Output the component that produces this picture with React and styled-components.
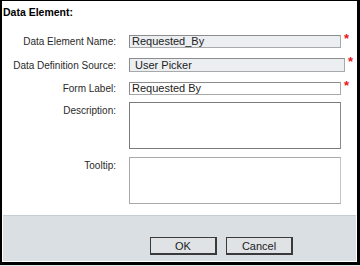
import React from 'react'
import styled, { createGlobalStyle } from 'styled-components'

const GlobalStyle = createGlobalStyle`
  html, body {
    margin: 0;
    padding: 0;
    background: #e6e9eb;
  }
  * {
    box-sizing: border-box;
  }
`

const Frame = styled.div`
  width: 360px;
  height: 265px;
  border-style: solid;
  border-color: #000;
  border-width: 1px 3px 3px 2px;
  background: #fff;
  display: flex;
  flex-direction: column;
  font-family: Arial, 'Liberation Sans', sans-serif;
  font-size: 10px;
  color: #2a2a2a;
`

const Body = styled.div`
  flex: 1;
  padding: 5px 0 0 3px;
`

const Title = styled.div`
  font-weight: bold;
  font-size: 10.5px;
  color: #000;
  height: 12px;
  line-height: 12px;
  margin: 0 0 17px -2px;
`

const Row = styled.div`
  display: flex;
  align-items: ${props => (props.top ? 'flex-start' : 'center')};
  margin-top: ${props => props.gap}px;
`

const Label = styled.div`
  width: 111px;
  text-align: right;
  white-space: nowrap;
  padding-top: ${props => (props.top ? '3px' : '0')};
  flex-shrink: 0;
`

const Field = styled.div`
  margin-left: 13px;
  width: ${props => props.width}px;
  height: ${props => props.height}px;
  background: ${props => (props.readOnly ? '#eceff2' : '#fff')};
  border: 1px solid #a9a9a9;
  border-top-color: #8c8c8c;
  border-left-color: #8c8c8c;
  padding-left: 2px;
  line-height: ${props => props.height - 2}px;
  font-size: 11px;
  color: #222;
  white-space: nowrap;
  overflow: hidden;
`

const Area = styled.div`
  margin-left: 13px;
  width: 212px;
  height: ${props => props.height}px;
  border: 1px solid ${props => (props.dark ? '#7a7a7a' : '#a9a9a9')};
  border-right-color: ${props => (props.dark ? '#8a8a8a' : '#c4c4c4')};
  background: #fff;
`

const Star = styled.span`
  color: #e8141c;
  font-size: 13px;
  font-weight: bold;
  margin-left: 3px;
  align-self: flex-start;
  line-height: 10px;
  margin-top: -1px;
`

const Footer = styled.div`
  height: 46px;
  flex-shrink: 0;
  margin: 0 1px 1px 1px;
  background: #d9dfe2;
  border-top: 1px solid #c5ced3;
  display: flex;
  align-items: flex-start;
  padding: 21px 0 0 147px;
  gap: 9px;
`

const Button = styled.button`
  width: 67px;
  height: 18px;
  padding: 0;
  background: #dfe3e6;
  border: 1px solid #3a3a3a;
  border-right-width: 2px;
  border-bottom-width: 2px;
  font-family: Arial, 'Liberation Sans', sans-serif;
  font-size: 11px;
  color: #222;
`

const App = () => (
  <>
    <GlobalStyle />
    <Frame>
      <Body>
        <Title>Data Element:</Title>
        <Row gap={0}>
          <Label>Data Element Name:</Label>
          <Field width={212} height={13} readOnly>Requested_By</Field>
          <Star>*</Star>
        </Row>
        <Row gap={10}>
          <Label>Data Definition Source:</Label>
          <Field width={216} height={14} readOnly>
            &nbsp;User Picker
          </Field>
          <Star>*</Star>
        </Row>
        <Row gap={10}>
          <Label>Form Label:</Label>
          <Field width={212} height={13}>Requested By</Field>
          <Star>*</Star>
        </Row>
        <Row gap={7} top>
          <Label top>Description:</Label>
          <Area height={47} dark />
        </Row>
        <Row gap={8} top>
          <Label top>Tooltip:</Label>
          <Area height={47} />
        </Row>
      </Body>
      <Footer>
        <Button>OK</Button>
        <Button>Cancel</Button>
      </Footer>
    </Frame>
  </>
)

export default App
